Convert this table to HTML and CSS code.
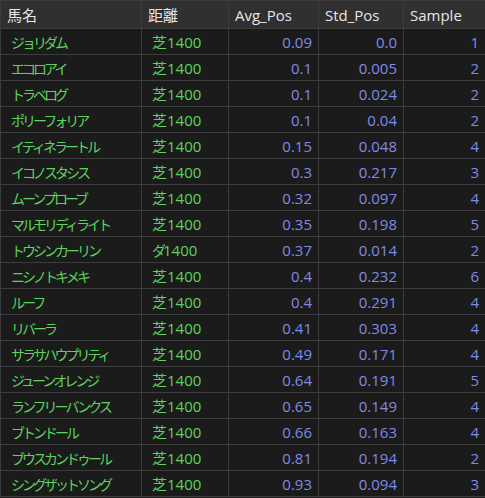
FILE: index.html
```html
<!DOCTYPE html>
<html lang="ja">
<head>
<meta charset="utf-8">
<link rel="stylesheet" href="styles.css">
</head>
<body>
<table class="grid">
  <colgroup>
    <col class="c1"><col class="c2"><col class="c3"><col class="c4"><col class="c5">
  </colgroup>
  <thead>
    <tr><th><span class="k">馬名</span></th><th><span class="k">距離</span></th><th>Avg_Pos</th><th>Std_Pos</th><th>Sample</th></tr>
  </thead>
  <tbody>
    <tr><td class="t"><span class="jp">ジョリダム</span></td><td class="t"><span class="k">芝</span>1400</td><td class="n">0.09</td><td class="n">0.0</td><td class="n">1</td></tr>
    <tr><td class="t"><span class="jp">エコロアイ</span></td><td class="t"><span class="k">芝</span>1400</td><td class="n">0.1</td><td class="n">0.005</td><td class="n">2</td></tr>
    <tr><td class="t"><span class="jp">トラベログ</span></td><td class="t"><span class="k">芝</span>1400</td><td class="n">0.1</td><td class="n">0.024</td><td class="n">2</td></tr>
    <tr><td class="t"><span class="jp">ポリーフォリア</span></td><td class="t"><span class="k">芝</span>1400</td><td class="n">0.1</td><td class="n">0.04</td><td class="n">2</td></tr>
    <tr><td class="t"><span class="jp">イティネラートル</span></td><td class="t"><span class="k">芝</span>1400</td><td class="n">0.15</td><td class="n">0.048</td><td class="n">4</td></tr>
    <tr><td class="t"><span class="jp">イコノスタシス</span></td><td class="t"><span class="k">芝</span>1400</td><td class="n">0.3</td><td class="n">0.217</td><td class="n">3</td></tr>
    <tr><td class="t"><span class="jp">ムーンプローブ</span></td><td class="t"><span class="k">芝</span>1400</td><td class="n">0.32</td><td class="n">0.097</td><td class="n">4</td></tr>
    <tr><td class="t"><span class="jp">マルモリディライト</span></td><td class="t"><span class="k">芝</span>1400</td><td class="n">0.35</td><td class="n">0.198</td><td class="n">5</td></tr>
    <tr><td class="t"><span class="jp">トウシンカーリン</span></td><td class="t"><span class="jp">ダ</span>1400</td><td class="n">0.37</td><td class="n">0.014</td><td class="n">2</td></tr>
    <tr><td class="t"><span class="jp">ニシノトキメキ</span></td><td class="t"><span class="k">芝</span>1400</td><td class="n">0.4</td><td class="n">0.232</td><td class="n">6</td></tr>
    <tr><td class="t"><span class="jp">ルーフ</span></td><td class="t"><span class="k">芝</span>1400</td><td class="n">0.4</td><td class="n">0.291</td><td class="n">4</td></tr>
    <tr><td class="t"><span class="jp">リバーラ</span></td><td class="t"><span class="k">芝</span>1400</td><td class="n">0.41</td><td class="n">0.303</td><td class="n">4</td></tr>
    <tr><td class="t"><span class="jp">サラサハウプリティ</span></td><td class="t"><span class="k">芝</span>1400</td><td class="n">0.49</td><td class="n">0.171</td><td class="n">4</td></tr>
    <tr><td class="t"><span class="jp">ジューンオレンジ</span></td><td class="t"><span class="k">芝</span>1400</td><td class="n">0.64</td><td class="n">0.191</td><td class="n">5</td></tr>
    <tr><td class="t"><span class="jp">ランフリーバンクス</span></td><td class="t"><span class="k">芝</span>1400</td><td class="n">0.65</td><td class="n">0.149</td><td class="n">4</td></tr>
    <tr><td class="t"><span class="jp">ブトンドール</span></td><td class="t"><span class="k">芝</span>1400</td><td class="n">0.66</td><td class="n">0.163</td><td class="n">4</td></tr>
    <tr><td class="t"><span class="jp">ブウスカンドゥール</span></td><td class="t"><span class="k">芝</span>1400</td><td class="n">0.81</td><td class="n">0.194</td><td class="n">2</td></tr>
    <tr><td class="t"><span class="jp">シングザットソング</span></td><td class="t"><span class="k">芝</span>1400</td><td class="n">0.93</td><td class="n">0.094</td><td class="n">3</td></tr>
  </tbody>
</table>
</body>
</html>
```
FILE: styles.css
```css
html, body {
  margin: 0;
  padding: 0;
  background: #1e1e1e;
}
.grid {
  border-collapse: collapse;
  table-layout: fixed;
  width: 485px;
  font-family: "Open Sans", "Noto Sans CJK JP", sans-serif;
  font-size: 15px;
  background: #1b1b1b;
}
.c1 { width: 141px; }
.c2 { width: 87px; }
.c3 { width: 90px; }
.c4 { width: 85px; }
.c5 { width: 82px; }
.grid th, .grid td {
  border: 1px solid #3c3c3c;
  white-space: nowrap;
  overflow: hidden;
  line-height: 20px;
}
.jp {
  font-family: "Noto Sans CJK JP", sans-serif;
  font-size: 14px;
  letter-spacing: -3px;
}
.k {
  font-family: "Noto Sans CJK JP", sans-serif;
  font-size: 15px;
  letter-spacing: 0;
}
.grid th {
  background: #303030;
  color: #e6e6e6;
  font-weight: normal;
  text-align: left;
  height: 28px;
  padding: 0 6px;
  box-sizing: border-box;
}
.grid td {
  height: 26px;
  padding: 0 6px 0 10px;
  box-sizing: border-box;
}
.grid td.t {
  color: #5ed35e;
}
.grid td.n {
  color: #7f8ae6;
  text-align: right;
}
```
